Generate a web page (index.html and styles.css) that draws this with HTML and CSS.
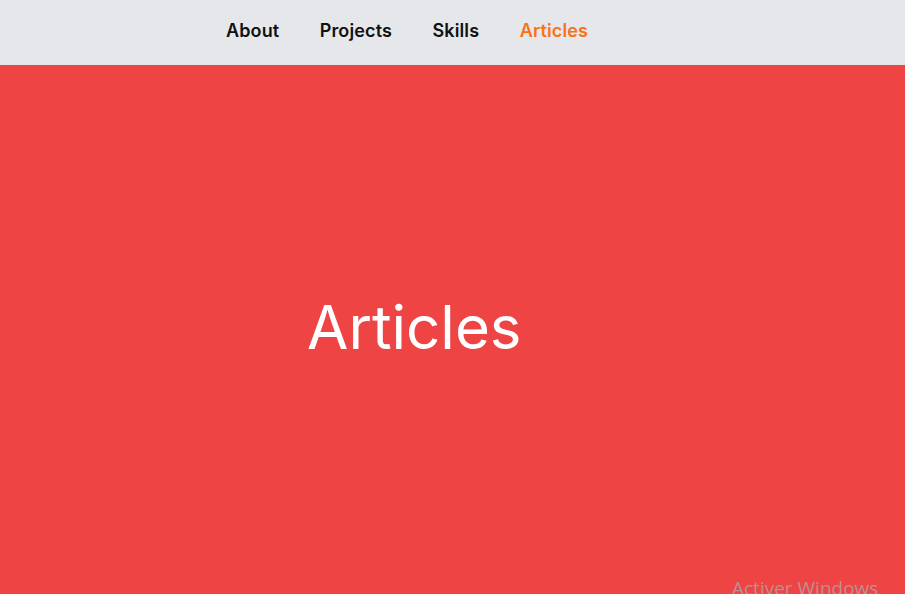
FILE: index.html
```html
<!DOCTYPE html>
<html lang="en">
<head>
<meta charset="utf-8">
<title>Articles</title>
<link rel="stylesheet" href="styles.css">
</head>
<body>
<nav class="nav">
  <a class="nav-link" href="#">About</a>
  <a class="nav-link" href="#">Projects</a>
  <a class="nav-link" href="#">Skills</a>
  <a class="nav-link active" href="#">Articles</a>
</nav>
<main class="hero">
  <h1 class="hero-title">Articles</h1>
</main>
<div class="watermark">Activer Windows</div>
</body>
</html>
```
FILE: styles.css
```css
html, body {
  margin: 0;
  padding: 0;
  height: 100%;
  overflow: hidden;
}
body {
  font-family: Inter, "Noto Sans", sans-serif;
  background: #ef4444;
}
.nav {
  height: 65px;
  background: #e5e7eb;
  display: flex;
  align-items: center;
  gap: 40.5px;
  padding-left: 226px;
  box-sizing: border-box;
}
.nav-link {
  color: #111111;
  text-decoration: none;
  font-size: 18px;
  font-weight: 600;
  letter-spacing: 0.12px;
  line-height: 1;
  padding-bottom: 3px;
}
.nav-link.active {
  color: #f97316;
}
.hero {
  height: 529px;
  background: #ef4444;
  display: flex;
  align-items: center;
  padding-left: 307px;
  box-sizing: border-box;
}
.hero-title {
  margin: 0;
  color: #ffffff;
  font-size: 60px;
  font-weight: 400;
  line-height: 1;
  padding-bottom: 6px;
}
.watermark {
  position: absolute;
  left: 732px;
  top: 575px;
  font-family: "Open Sans", "Noto Sans", sans-serif;
  font-size: 19px;
  color: rgba(170, 170, 170, 0.75);
  white-space: nowrap;
}
```
